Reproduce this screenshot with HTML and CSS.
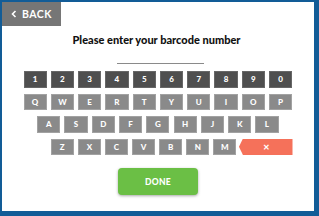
FILE: index.html
```html
<!DOCTYPE html>
<html>
<head>
<meta charset="utf-8">
<link rel="stylesheet" href="styles.css">
</head>
<body>
<div class="screen">
  <div class="panel">
    <button class="back">
      <svg class="chev" width="6" height="8" viewBox="0 0 6 8"><polyline points="4.5,1 1.5,4 4.5,7" fill="none" stroke="#fff" stroke-width="1.6"/></svg>
      <span>BACK</span>
    </button>
    <h1 class="title">Please enter your barcode number</h1>
    <div class="entry"></div>
    <div class="keyboard">
      <div class="row">
        <span class="key num">1</span><span class="key num">2</span><span class="key num">3</span><span class="key num">4</span><span class="key num">5</span><span class="key num">6</span><span class="key num">7</span><span class="key num">8</span><span class="key num">9</span><span class="key num">0</span>
      </div>
      <div class="row">
        <span class="key">Q</span><span class="key">W</span><span class="key">E</span><span class="key">R</span><span class="key">T</span><span class="key">Y</span><span class="key">U</span><span class="key">I</span><span class="key">O</span><span class="key">P</span>
      </div>
      <div class="row row-a">
        <span class="key">A</span><span class="key">S</span><span class="key">D</span><span class="key">F</span><span class="key">G</span><span class="key">H</span><span class="key">J</span><span class="key">K</span><span class="key">L</span>
      </div>
      <div class="row row-z">
        <span class="key">Z</span><span class="key">X</span><span class="key">C</span><span class="key">V</span><span class="key">B</span><span class="key">N</span><span class="key">M</span><span class="bksp">✕</span>
      </div>
    </div>
    <button class="done">DONE</button>
  </div>
</div>
</body>
</html>
```
FILE: styles.css
```css
html, body {
  margin: 0;
  padding: 0;
}
body {
  font-family: Lato, "Open Sans", "Liberation Sans", sans-serif;
}
.screen {
  width: 319px;
  height: 216px;
  box-sizing: border-box;
  padding: 2px 5px 5px 2px;
  background: #125c97;
}
.panel {
  height: 100%;
  background: #ffffff;
  display: flex;
  flex-direction: column;
  align-items: center;
}
.back {
  align-self: flex-start;
  width: 59px;
  height: 24px;
  margin: 0;
  padding: 0 0 0 9px;
  border: 0;
  background: #767676;
  color: #fff;
  font-family: Lato, "Open Sans", sans-serif;
  font-size: 10.5px;
  font-weight: 700;
  letter-spacing: 0.5px;
  display: flex;
  align-items: center;
  gap: 5px;
}
.title {
  margin: 7px 0 0 -3px;
  font-size: 11px;
  line-height: 13px;
  font-weight: 900;
  color: #111;
}
.entry {
  width: 87px;
  height: 1px;
  background: #8a8a8a;
  margin: 17px 0 0 5px;
}
.keyboard {
  width: 269px;
  margin-top: 7px;
  display: flex;
  flex-direction: column;
  gap: 6px;
}
.row {
  display: flex;
  gap: 4.1px;
  height: 16.5px;
}
.row-a {
  padding-left: 13.6px;
}
.row-z {
  padding-left: 27.3px;
}
.key {
  width: 23.2px;
  box-sizing: border-box;
  background: #8a8a8a;
  border: 1px solid #a2a2a2;
  color: #fff;
  font-size: 8px;
  font-weight: 900;
  display: flex;
  align-items: center;
  justify-content: center;
}
.key.num {
  background: #4f4f4f;
  border-color: #676767;
}
.bksp {
  width: 54px;
  margin-left: -1.5px;
  background: #f5715a;
  color: #fff;
  font-size: 8px;
  font-weight: 700;
  display: flex;
  align-items: center;
  justify-content: center;
  padding-left: 2px;
  box-sizing: border-box;
  clip-path: polygon(4px 0, 100% 0, 100% 100%, 4px 100%, 0 50%);
}
.done {
  margin-top: 13px;
  width: 80px;
  height: 27px;
  border: 0;
  border-radius: 4px;
  background: #6bbf45;
  box-shadow: 0 1px 3px rgba(0,0,0,0.35);
  color: #fff;
  font-family: Lato, "Open Sans", sans-serif;
  font-size: 8.5px;
  font-weight: 900;
  letter-spacing: 0.3px;
}
```
